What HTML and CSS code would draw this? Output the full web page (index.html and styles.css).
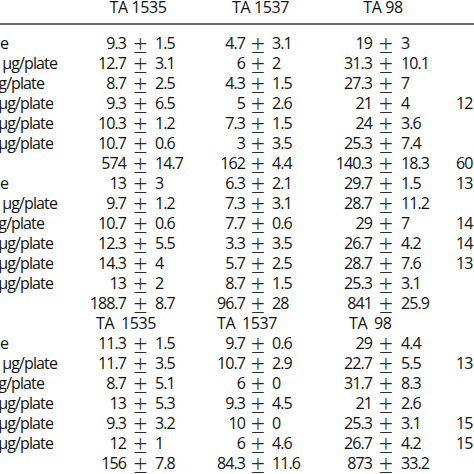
FILE: index.html
```html
<!DOCTYPE html>
<html lang="en">
<head>
<meta charset="utf-8">
<title>Mutagenicity counts</title>
<link rel="stylesheet" href="styles.css">
</head>
<body>
<div class="table">
  <div class="row head">
    <div class="lab"></div>
    <div class="h h1">TA 1535</div>
    <div class="h h2">TA 1537</div>
    <div class="h h3">TA 98</div>
  </div>
  <div class="rule"></div>
  <div class="body">
    <div class="row"><div class="lab la">Vehicle</div><div class="m">9.3</div><div class="pm">±</div><div class="s">1.5</div><div class="m">4.7</div><div class="pm">±</div><div class="s">3.1</div><div class="m">19</div><div class="pm">±</div><div class="s">3</div><div class="x"></div></div>
    <div class="row"><div class="lab lb"><span class="dose">5</span>μg/plate</div><div class="m">12.7</div><div class="pm">±</div><div class="s">3.1</div><div class="m">6</div><div class="pm">±</div><div class="s">2</div><div class="m">31.3</div><div class="pm">±</div><div class="s">10.1</div><div class="x"></div></div>
    <div class="row"><div class="lab lc">50 μg/plate</div><div class="m">8.7</div><div class="pm">±</div><div class="s">2.5</div><div class="m">4.3</div><div class="pm">±</div><div class="s">1.5</div><div class="m">27.3</div><div class="pm">±</div><div class="s">7</div><div class="x"></div></div>
    <div class="row"><div class="lab ld">500 μg/plate</div><div class="m">9.3</div><div class="pm">±</div><div class="s">6.5</div><div class="m">5</div><div class="pm">±</div><div class="s">2.6</div><div class="m">21</div><div class="pm">±</div><div class="s">4</div><div class="x">12</div></div>
    <div class="row"><div class="lab ld">1000 μg/plate</div><div class="m">10.3</div><div class="pm">±</div><div class="s">1.2</div><div class="m">7.3</div><div class="pm">±</div><div class="s">1.5</div><div class="m">24</div><div class="pm">±</div><div class="s">3.6</div><div class="x"></div></div>
    <div class="row"><div class="lab ld">5000 μg/plate</div><div class="m">10.7</div><div class="pm">±</div><div class="s">0.6</div><div class="m">3</div><div class="pm">±</div><div class="s">3.5</div><div class="m">25.3</div><div class="pm">±</div><div class="s">7.4</div><div class="x"></div></div>
    <div class="row"><div class="lab"></div><div class="m">574</div><div class="pm">±</div><div class="s">14.7</div><div class="m">162</div><div class="pm">±</div><div class="s">4.4</div><div class="m">140.3</div><div class="pm">±</div><div class="s">18.3</div><div class="x">60</div></div>

    <div class="row"><div class="lab la">Vehicle</div><div class="m">13</div><div class="pm">±</div><div class="s">3</div><div class="m">6.3</div><div class="pm">±</div><div class="s">2.1</div><div class="m">29.7</div><div class="pm">±</div><div class="s">1.5</div><div class="x">13</div></div>
    <div class="row"><div class="lab lb"><span class="dose">5</span>μg/plate</div><div class="m">9.7</div><div class="pm">±</div><div class="s">1.2</div><div class="m">7.3</div><div class="pm">±</div><div class="s">3.1</div><div class="m">28.7</div><div class="pm">±</div><div class="s">11.2</div><div class="x"></div></div>
    <div class="row"><div class="lab lc">50 μg/plate</div><div class="m">10.7</div><div class="pm">±</div><div class="s">0.6</div><div class="m">7.7</div><div class="pm">±</div><div class="s">0.6</div><div class="m">29</div><div class="pm">±</div><div class="s">7</div><div class="x">14</div></div>
    <div class="row"><div class="lab ld">500 μg/plate</div><div class="m">12.3</div><div class="pm">±</div><div class="s">5.5</div><div class="m">3.3</div><div class="pm">±</div><div class="s">3.5</div><div class="m">26.7</div><div class="pm">±</div><div class="s">4.2</div><div class="x">14</div></div>
    <div class="row"><div class="lab ld">1000 μg/plate</div><div class="m">14.3</div><div class="pm">±</div><div class="s">4</div><div class="m">5.7</div><div class="pm">±</div><div class="s">2.5</div><div class="m">28.7</div><div class="pm">±</div><div class="s">7.6</div><div class="x">13</div></div>
    <div class="row"><div class="lab ld">5000 μg/plate</div><div class="m">13</div><div class="pm">±</div><div class="s">2</div><div class="m">8.7</div><div class="pm">±</div><div class="s">1.5</div><div class="m">25.3</div><div class="pm">±</div><div class="s">3.1</div><div class="x"></div></div>
    <div class="row"><div class="lab"></div><div class="m">188.7</div><div class="pm">±</div><div class="s">8.7</div><div class="m">96.7</div><div class="pm">±</div><div class="s">28</div><div class="m">841</div><div class="pm">±</div><div class="s">25.9</div><div class="x"></div></div>

    <div class="row sub"><div class="lab"></div><div class="g g1">TA 1535</div><div class="g g2">TA 1537</div><div class="g g3">TA 98</div></div>

    <div class="row"><div class="lab la">Vehicle</div><div class="m">11.3</div><div class="pm">±</div><div class="s">1.5</div><div class="m">9.7</div><div class="pm">±</div><div class="s">0.6</div><div class="m">29</div><div class="pm">±</div><div class="s">4.4</div><div class="x"></div></div>
    <div class="row"><div class="lab lb"><span class="dose">5</span>μg/plate</div><div class="m">11.7</div><div class="pm">±</div><div class="s">3.5</div><div class="m">10.7</div><div class="pm">±</div><div class="s">2.9</div><div class="m">22.7</div><div class="pm">±</div><div class="s">5.5</div><div class="x">13</div></div>
    <div class="row"><div class="lab lc">50 μg/plate</div><div class="m">8.7</div><div class="pm">±</div><div class="s">5.1</div><div class="m">6</div><div class="pm">±</div><div class="s">0</div><div class="m">31.7</div><div class="pm">±</div><div class="s">8.3</div><div class="x"></div></div>
    <div class="row"><div class="lab ld">500 μg/plate</div><div class="m">13</div><div class="pm">±</div><div class="s">5.3</div><div class="m">9.3</div><div class="pm">±</div><div class="s">4.5</div><div class="m">21</div><div class="pm">±</div><div class="s">2.6</div><div class="x"></div></div>
    <div class="row"><div class="lab ld">1000 μg/plate</div><div class="m">9.3</div><div class="pm">±</div><div class="s">3.2</div><div class="m">10</div><div class="pm">±</div><div class="s">0</div><div class="m">25.3</div><div class="pm">±</div><div class="s">3.1</div><div class="x">15</div></div>
    <div class="row"><div class="lab ld">5000 μg/plate</div><div class="m">12</div><div class="pm">±</div><div class="s">1</div><div class="m">6</div><div class="pm">±</div><div class="s">4.6</div><div class="m">26.7</div><div class="pm">±</div><div class="s">4.2</div><div class="x">15</div></div>
    <div class="row"><div class="lab"></div><div class="m">156</div><div class="pm">±</div><div class="s">7.8</div><div class="m">84.3</div><div class="pm">±</div><div class="s">11.6</div><div class="m">873</div><div class="pm">±</div><div class="s">33.2</div><div class="x"></div></div>
  </div>
</div>
</body>
</html>
```

FILE: styles.css
```css
html, body {
  margin: 0;
  padding: 0;
  background: #ffffff;
  overflow: hidden;
}

body {
  width: 474px;
  height: 474px;
  font-family: "Open Sans", "Noto Sans", sans-serif;
  font-size: 16px;
  font-weight: 500;
  letter-spacing: -0.9px;
  color: #111111;
}

.table {
  width: 474px;
}

.row {
  display: grid;
  grid-template-columns: 60px 66px 29px 47px 43px 26px 48px 53px 28px 56px 1fr;
  height: 20px;
  line-height: 20px;
  white-space: nowrap;
}

.head {
  height: 14px;
  line-height: 14px;
}

.rule {
  height: 2px;
  margin-top: 9px;
  background: #6e6e6e;
}

.body {
  padding-top: 8px;
}

.lab {
  display: flex;
  justify-content: flex-end;
  min-width: 0;
}

.la { padding-right: 52px; }
.lb { padding-right: 3px; }
.lc { padding-right: 16px; }
.ld { padding-right: 7px; }

.dose {
  margin-right: 16px;
  visibility: hidden;
}

.m {
  text-align: right;
}

.pm {
  text-align: center;
  font-size: 25px;
  font-weight: 300;
  line-height: 20px;
  letter-spacing: 0;
  height: 20px;
  color: #2a2a2a;
}

.s {
  text-align: left;
}

.row > .s:nth-child(7) {
  padding-left: 1px;
}

.row > .s:nth-child(10) {
  padding-left: 1px;
}

.h {
  text-align: center;
  letter-spacing: -0.4px;
}

.h1 { grid-column: 2 / 5; padding-left: 14px; }
.h2 { grid-column: 5 / 8; }
.h3 { grid-column: 8 / 11; padding-right: 9px; }

.g {
  text-align: left;
  letter-spacing: -0.4px;
  word-spacing: 3px;
}

.g1 { grid-column: 2 / 5; padding-left: 36px; }
.g2 { grid-column: 5 / 8; padding-left: 15px; }
.g3 { grid-column: 8 / 11; padding-left: 30px; }
```
